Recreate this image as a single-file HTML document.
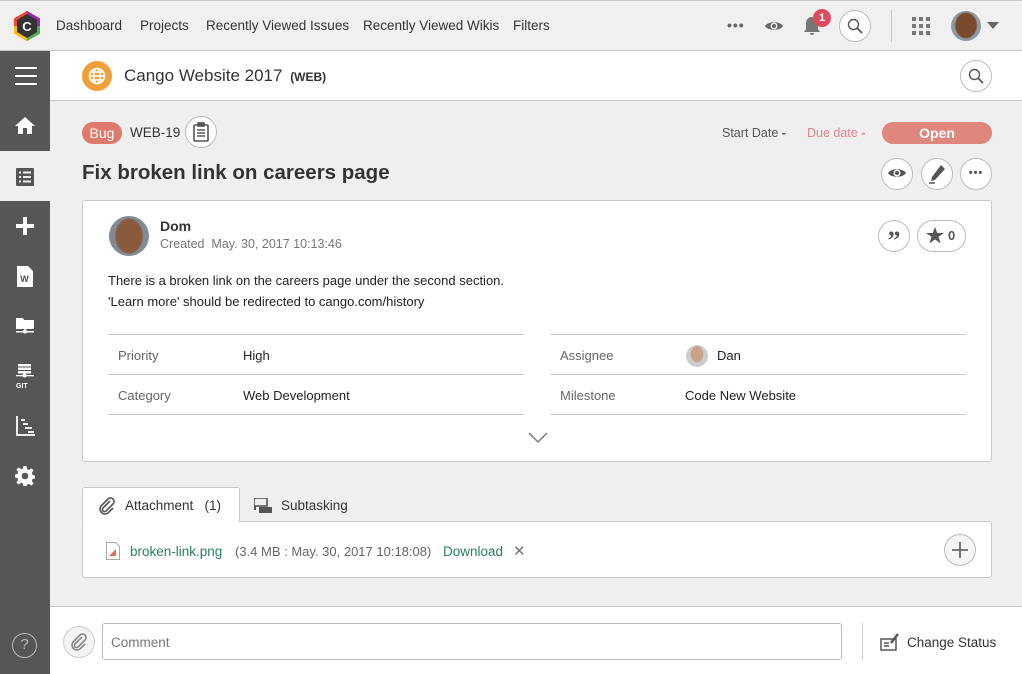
<!DOCTYPE html>
<html><head><meta charset="utf-8"><style>
*{box-sizing:border-box;margin:0;padding:0}
body{width:1022px;height:674px;overflow:hidden;position:relative;font-family:"Liberation Sans",sans-serif;color:#333;background:#efefef;font-size:13px}
.a{position:absolute}
.top{left:0;top:0;width:1022px;height:51px;background:#f0f0f0;border-top:1px solid #c8c8c8;border-bottom:1px solid #c8c8c8}
.nav{top:18px;font-size:13.5px;color:#333}
.side{left:0;top:51px;width:50px;height:623px;background:#565656}
.circ{border:1px solid #bbb;border-radius:50%;background:#fff}
.hr{height:1px;background:#c8c8c8}
.lbl{color:#666;font-size:13px}
.val{color:#222;font-size:13px}
</style></head><body>
<div class="a top"></div>
<svg class="a" style="left:13px;top:10px" width="28" height="32" viewBox="0 0 28 32">
<polygon points="14,1 27,8.5 27,23.5 14,31 1,23.5 1,8.5" fill="#e91e63"/>
<polygon points="14,1 27,8.5 27,16 14,16" fill="#9c27b0"/>
<polygon points="1,8.5 14,1 14,16 1,16" fill="#f44336"/>
<polygon points="1,16 14,16 14,31 1,23.5" fill="#ffc107"/>
<polygon points="14,16 27,16 27,23.5 14,31" fill="#4caf50"/>
<polygon points="14,4 24,10 24,22 14,28 4,22 4,10" fill="#333"/>
<text x="14" y="21" font-size="13" font-weight="bold" fill="#fff" text-anchor="middle" font-family="Liberation Sans">C</text></svg>
<div class="a nav" style="left:56px">Dashboard</div>
<div class="a nav" style="left:140px">Projects</div>
<div class="a nav" style="left:206px">Recently Viewed Issues</div>
<div class="a nav" style="left:363px">Recently Viewed Wikis</div>
<div class="a nav" style="left:513px">Filters</div>
<div class="a" style="left:727px;top:17px;font-size:14px;color:#666;letter-spacing:1px;font-weight:bold">•••</div>
<svg class="a" style="left:764px;top:19px" width="20" height="14" viewBox="0 0 20 14"><path d="M1 7C4 2 16 2 19 7C16 12 4 12 1 7Z" fill="#666"/><circle cx="10" cy="7" r="3.5" fill="#f0f0f0"/><circle cx="10" cy="7" r="2" fill="#666"/></svg>
<svg class="a" style="left:802px;top:15px" width="20" height="22" viewBox="0 0 20 22"><path d="M10 2C6 2 4 5 4 9V14L2 17H18L16 14V9C16 5 14 2 10 2ZM8 18A2 2 0 0 0 12 18Z" fill="#777"/></svg>
<div class="a" style="left:813px;top:9px;width:18px;height:18px;border-radius:50%;background:#e04a5f;color:#fff;font-size:11px;font-weight:bold;text-align:center;line-height:18px">1</div>
<div class="a circ" style="left:839px;top:10px;width:32px;height:32px"></div>
<svg class="a" style="left:846px;top:17px" width="18" height="18" viewBox="0 0 18 18"><circle cx="7.5" cy="7.5" r="5" stroke="#555" stroke-width="1.4" fill="none"/><path d="M11 11L16 16" stroke="#555" stroke-width="1.8"/></svg>
<div class="a" style="left:891px;top:10px;width:1px;height:32px;background:#c8c8c8"></div>
<svg class="a" style="left:911px;top:16px" width="20" height="20" viewBox="0 0 20 20" fill="#777"><rect x="1" y="1" width="4" height="4"/><rect x="8" y="1" width="4" height="4"/><rect x="15" y="1" width="4" height="4"/><rect x="1" y="8" width="4" height="4"/><rect x="8" y="8" width="4" height="4"/><rect x="15" y="8" width="4" height="4"/><rect x="1" y="15" width="4" height="4"/><rect x="8" y="15" width="4" height="4"/><rect x="15" y="15" width="4" height="4"/></svg>
<div class="a" style="left:951px;top:11px;width:30px;height:30px;border-radius:50%;background:radial-gradient(ellipse 38% 45% at 50% 48%,#7a4a2e 0 90%,#8e9aa6 100%)"></div>
<div class="a" style="left:987px;top:22px;border-left:6px solid transparent;border-right:6px solid transparent;border-top:7px solid #666"></div>

<div class="a" style="left:50px;top:51px;width:972px;height:50px;background:#fff;border-bottom:1px solid #c8c8c8"></div>
<div class="a" style="left:82px;top:61px;width:30px;height:30px;border-radius:50%;background:#f0a03a"></div>
<svg class="a" style="left:88px;top:67px" width="18" height="18" viewBox="0 0 18 18" fill="none" stroke="#fff" stroke-width="1.5"><circle cx="9" cy="9" r="7.5"/><ellipse cx="9" cy="9" rx="3.3" ry="7.5"/><path d="M1.5 9H16.5M3 5H15M3 13H15"/></svg>
<div class="a" style="left:124px;top:66px;font-size:17px;color:#333">Cango Website 2017 <span style="font-size:12px;font-weight:bold;color:#333;margin-left:3px">(WEB)</span></div>
<div class="a circ" style="left:960px;top:60px;width:32px;height:32px"></div>
<svg class="a" style="left:967px;top:67px" width="18" height="18" viewBox="0 0 18 18"><circle cx="7.5" cy="7.5" r="5" stroke="#555" stroke-width="1.4" fill="none"/><path d="M11 11L16 16" stroke="#555" stroke-width="1.8"/></svg>

<div class="a side"></div>
<div class="a" style="left:0;top:151px;width:50px;height:50px;background:#efefef"></div>
<svg class="a" style="left:15px;top:66px" width="22" height="20" viewBox="0 0 22 20" stroke="#fff" stroke-width="2"><path d="M0 2H22M0 10H22M0 18H22"/></svg>
<svg class="a" style="left:15px;top:116px" width="20" height="18" viewBox="0 0 20 18" fill="#fff"><path d="M10 1L0 10H3V18H8V12H12V18H17V10H20Z"/></svg>
<svg class="a" style="left:16px;top:168px" width="18" height="18" viewBox="0 0 18 18" fill="#555"><rect width="18" height="18" rx="1"/><g fill="#efefef"><rect x="3" y="3.5" width="2" height="2"/><rect x="7" y="3.5" width="8" height="2"/><rect x="3" y="8" width="2" height="2"/><rect x="7" y="8" width="8" height="2"/><rect x="3" y="12.5" width="2" height="2"/><rect x="7" y="12.5" width="8" height="2"/></g></svg>
<svg class="a" style="left:15px;top:216px" width="20" height="20" viewBox="0 0 20 20" stroke="#fff" stroke-width="4"><path d="M10 1V19M1 10H19"/></svg>
<svg class="a" style="left:17px;top:266px" width="16" height="21" viewBox="0 0 16 21"><path d="M0 0H11L16 5V21H0Z" fill="#fff"/><text x="7.5" y="16" font-size="9" font-weight="bold" text-anchor="middle" fill="#555" font-family="Liberation Sans">W</text></svg>
<svg class="a" style="left:16px;top:318px" width="18" height="17" viewBox="0 0 18 17" fill="#fff"><path d="M0 0H7L8 2H18V11H0Z"/><rect x="8" y="11" width="2" height="3"/><rect x="0" y="13" width="18" height="1.5"/><circle cx="9" cy="13.5" r="2"/></svg>
<svg class="a" style="left:16px;top:364px" width="18" height="16" viewBox="0 0 18 16" fill="#fff"><rect x="2" y="0" width="13" height="2.5"/><rect x="2" y="3.5" width="13" height="2.5"/><rect x="2" y="7" width="13" height="2.5"/><rect x="0" y="11" width="18" height="1.3"/><circle cx="8.5" cy="11.5" r="2"/></svg>
<div class="a" style="left:16px;top:383px;font-size:7px;color:#fff;font-weight:bold">GIT</div>
<svg class="a" style="left:16px;top:416px" width="19" height="20" viewBox="0 0 19 20" fill="none" stroke="#fff" stroke-width="1.8"><path d="M1 0V19H19M5 4H9M7 8H12M9 12H16M12 16H18"/></svg>
<svg class="a" style="left:15px;top:466px" width="20" height="20" viewBox="0 0 20 20"><path fill="#fff" d="M8.5 0h3l.5 3 2 1 2.5-1.8 2.1 2.1L16.8 7l.8 2 2.4.5v3l-2.4.5-.8 2 1.8 2.5-2.1 2.1L14 17.8l-2 .8-.5 2.4h-3L8 17.6l-2-.8-2.5 1.8-2.1-2.1L3.2 14l-.8-2L0 11.5v-3L2.4 8l.8-2L1.4 3.5l2.1-2.1L6 3.2l2-.8z"/><circle cx="10" cy="10" r="3.3" fill="#565656"/></svg>
<div class="a" style="left:12px;top:633px;width:25px;height:25px;border-radius:50%;border:1.5px solid #bbb;color:#bbb;text-align:center;line-height:22px;font-size:15px">?</div>

<div class="a" style="left:82px;top:122px;width:40px;height:22px;border-radius:11px;background:#de7a6b;color:#fff;font-size:14px;text-align:center;line-height:22px">Bug</div>
<div class="a" style="left:130px;top:125px;font-size:13.5px;color:#333">WEB-19</div>
<div class="a circ" style="left:185px;top:116px;width:32px;height:32px"></div>
<svg class="a" style="left:193px;top:122px" width="16" height="20" viewBox="0 0 16 20" fill="none" stroke="#555" stroke-width="1.6"><rect x="1" y="3" width="14" height="16" rx="1"/><rect x="5" y="1" width="6" height="3" fill="#555"/><path d="M4 8H12M4 11H12M4 14H12"/></svg>
<div class="a" style="left:722px;top:126px;font-size:12.5px;color:#555">Start Date <b>-</b></div>
<div class="a" style="left:807px;top:126px;font-size:12.5px;color:#e6838e">Due date <b>-</b></div>
<div class="a" style="left:882px;top:122px;width:110px;height:22px;border-radius:11px;background:#e0877d;color:#fff;font-size:14px;font-weight:bold;text-align:center;line-height:22px">Open</div>
<div class="a" style="left:82px;top:161px;font-size:20.5px;font-weight:bold;color:#333">Fix broken link on careers page</div>
<div class="a circ" style="left:881px;top:158px;width:32px;height:32px"></div>
<svg class="a" style="left:887px;top:166px" width="20" height="14" viewBox="0 0 20 14"><path d="M1 7C4 2 16 2 19 7C16 12 4 12 1 7Z" fill="#555"/><circle cx="10" cy="7" r="3.5" fill="#fff"/><circle cx="10" cy="7" r="2" fill="#555"/></svg>
<div class="a circ" style="left:921px;top:158px;width:32px;height:32px"></div>
<svg class="a" style="left:927px;top:163px" width="20" height="22" viewBox="0 0 20 22"><path d="M14 2L18 6L8 17L4 18L5 14Z" fill="#555"/><path d="M2 20H8" stroke="#555" stroke-width="1.5"/></svg>
<div class="a circ" style="left:960px;top:158px;width:32px;height:32px;text-align:center;font-size:11px;line-height:29px;color:#555;font-weight:bold;letter-spacing:1px">•••</div>

<div class="a" style="left:82px;top:200px;width:910px;height:262px;background:#fff;border:1px solid #c8c8c8;border-radius:3px"></div>
<div class="a" style="left:109px;top:216px;width:40px;height:40px;border-radius:50%;background:radial-gradient(ellipse 36% 46% at 50% 50%,#8a5a3c 0 90%,#7f8b96 100%)"></div>
<div class="a" style="left:160px;top:218px;font-size:14px;font-weight:bold;color:#333">Dom</div>
<div class="a" style="left:160px;top:237px;font-size:12.5px;color:#777">Created &nbsp;May. 30, 2017 10:13:46</div>
<div class="a circ" style="left:878px;top:220px;width:32px;height:32px;text-align:center;font-size:26px;font-weight:bold;color:#555;line-height:40px;font-family:'Liberation Serif',serif">”</div>
<div class="a" style="left:917px;top:220px;width:49px;height:32px;border:1px solid #bbb;border-radius:16px;background:#fff"></div>
<svg class="a" style="left:926px;top:227px" width="18" height="17" viewBox="0 0 18 17"><path d="M9 0L11.2 6H18L12.5 9.8L14.6 16.5L9 12.4L3.4 16.5L5.5 9.8L0 6H6.8Z" fill="#555"/></svg>
<div class="a" style="left:948px;top:228px;font-size:13px;font-weight:bold;color:#555">0</div>
<div class="a" style="left:108px;top:270px;font-size:13px;color:#222;line-height:21px">There is a broken link on the careers page under the second section.<br>'Learn more' should be redirected to cango.com/history</div>
<div class="a hr" style="left:108px;top:334px;width:416px"></div>
<div class="a hr" style="left:108px;top:374px;width:416px"></div>
<div class="a hr" style="left:108px;top:414px;width:416px"></div>
<div class="a hr" style="left:550px;top:334px;width:416px"></div>
<div class="a hr" style="left:550px;top:374px;width:416px"></div>
<div class="a hr" style="left:550px;top:414px;width:416px"></div>
<div class="a lbl" style="left:118px;top:348px">Priority</div>
<div class="a val" style="left:243px;top:348px">High</div>
<div class="a lbl" style="left:118px;top:388px">Category</div>
<div class="a val" style="left:243px;top:388px">Web Development</div>
<div class="a lbl" style="left:560px;top:348px">Assignee</div>
<div class="a" style="left:686px;top:345px;width:22px;height:22px;border-radius:50%;background:radial-gradient(ellipse 30% 38% at 50% 42%,#c9a288 0 90%,#ccc 100%)"></div>
<div class="a val" style="left:717px;top:348px">Dan</div>
<div class="a lbl" style="left:560px;top:388px">Milestone</div>
<div class="a val" style="left:685px;top:388px">Code New Website</div>
<svg class="a" style="left:528px;top:432px" width="20" height="12" viewBox="0 0 20 12"><path d="M1 1L10 10L19 1" stroke="#888" stroke-width="1.6" fill="none"/></svg>

<div class="a" style="left:82px;top:521px;width:910px;height:57px;background:#fff;border:1px solid #c8c8c8;border-radius:3px"></div>
<div class="a" style="left:82px;top:487px;width:158px;height:35px;background:#fff;border:1px solid #c8c8c8;border-bottom:none;border-radius:3px 3px 0 0"></div>
<svg class="a" style="left:98px;top:497px" width="18" height="18" viewBox="0 0 18 18"><path d="M12 4L5 11A2 2 0 0 0 8 14L15 7A3.5 3.5 0 0 0 10 2L3 9A5 5 0 0 0 10 16L15 11" stroke="#555" stroke-width="1.6" fill="none"/></svg>
<div class="a" style="left:125px;top:498px;font-size:13.5px;color:#333">Attachment &nbsp;&nbsp;(1)</div>
<svg class="a" style="left:254px;top:498px" width="18" height="16" viewBox="0 0 18 16" fill="#555"><rect x="0" y="0" width="13" height="8" fill="none" stroke="#555" stroke-width="1.6"/><rect x="5" y="9" width="13" height="6"/><rect x="0" y="8" width="2" height="4"/></svg>
<div class="a" style="left:281px;top:498px;font-size:13.5px;color:#333">Subtasking</div>
<svg class="a" style="left:106px;top:542px" width="14" height="18" viewBox="0 0 14 18"><path d="M0.5 0.5H9.5L13.5 4.5V17.5H0.5Z" fill="#fff" stroke="#aaa"/><path d="M3 14L10 7V14Z" fill="#e07050"/></svg>
<div class="a" style="left:130px;top:544px;font-size:13.5px;color:#2a8060">broken-link.png</div>
<div class="a" style="left:235px;top:544px;font-size:13px;color:#666">(3.4 MB : May. 30, 2017 10:18:08)</div>
<div class="a" style="left:443px;top:544px;font-size:13.5px;color:#2a8060">Download</div>
<div class="a" style="left:513px;top:542px;font-size:15px;color:#777">✕</div>
<div class="a" style="left:944px;top:534px;width:32px;height:32px;border:1px solid #bbb;border-radius:50%;background:#f5f5f5"></div>
<svg class="a" style="left:952px;top:542px" width="16" height="16" viewBox="0 0 16 16" stroke="#555" stroke-width="1.5"><path d="M8 0V16M0 8H16"/></svg>

<div class="a" style="left:50px;top:606px;width:972px;height:68px;background:#fff;border-top:1px solid #c8c8c8"></div>
<div class="a" style="left:63px;top:626px;width:32px;height:32px;border:1px solid #ccc;border-radius:50%;background:#f3f3f3"></div>
<svg class="a" style="left:70px;top:633px" width="18" height="18" viewBox="0 0 18 18"><path d="M12 4L5 11A2 2 0 0 0 8 14L15 7A3.5 3.5 0 0 0 10 2L3 9A5 5 0 0 0 10 16L15 11" stroke="#888" stroke-width="1.6" fill="none"/></svg>
<div class="a" style="left:102px;top:623px;width:740px;height:37px;border:1px solid #bbb;border-radius:3px;background:#fff;padding:11px 8px;font-size:13.5px;color:#777">Comment</div>
<div class="a" style="left:862px;top:623px;width:1px;height:38px;background:#ccc"></div>
<svg class="a" style="left:880px;top:632px" width="20" height="20" viewBox="0 0 20 20" fill="none" stroke="#555" stroke-width="1.5"><rect x="1" y="7" width="15" height="11"/><path d="M4 11H9M4 14H9"/><path d="M11 11L18 2" stroke-width="2.5"/></svg>
<div class="a" style="left:907px;top:635px;font-size:13.5px;color:#333">Change Status</div>
</body></html>
